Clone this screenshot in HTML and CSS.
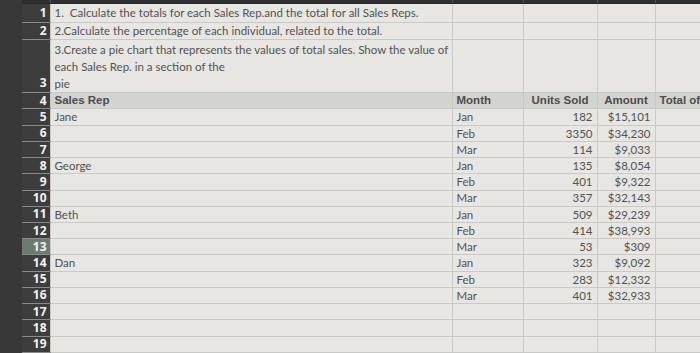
FILE: index.html
```html
<!DOCTYPE html>
<html lang="en">
<head>
  <meta charset="UTF-8">
  <title>Sales Reps</title>
  <link rel="stylesheet" href="styles.css">
</head>
<body>
  <div class="screen">
    <div class="bezel"></div>
    <table class="sheet">
      <colgroup>
        <col class="c-num">
        <col class="c-a">
        <col class="c-b">
        <col class="c-c">
        <col class="c-d">
        <col class="c-e">
      </colgroup>
      <tr class="colhead">
        <th></th><th></th><th></th><th></th><th></th><th></th>
      </tr>
      <tr class="r1">
        <th>1</th>
        <td>1. &nbsp;Calculate the totals for each Sales Rep.and the total for all Sales Reps.</td>
        <td></td><td></td><td></td><td></td>
      </tr>
      <tr class="r2">
        <th>2</th>
        <td>2.Calculate the percentage of each individual, related to the total.</td>
        <td></td><td></td><td></td><td></td>
      </tr>
      <tr class="r3">
        <th>3</th>
        <td class="wrap">3.Create a pie chart that represents the values of total sales. Show the value of<br>each Sales Rep. in a section of the<br>pie</td>
        <td></td><td></td><td></td><td></td>
      </tr>
      <tr class="head">
        <th>4</th>
        <td>Sales Rep</td>
        <td>Month</td>
        <td class="ctr">Units Sold</td>
        <td class="ctr">Amount</td>
        <td class="clip">Total of</td>
      </tr>
      <tr><th>5</th><td>Jane</td><td>Jan</td><td class="num">182</td><td class="num">$15,101</td><td></td></tr>
      <tr><th>6</th><td></td><td>Feb</td><td class="num">3350</td><td class="num">$34,230</td><td></td></tr>
      <tr><th>7</th><td></td><td>Mar</td><td class="num">114</td><td class="num">$9,033</td><td></td></tr>
      <tr><th>8</th><td>George</td><td>Jan</td><td class="num">135</td><td class="num">$8,054</td><td></td></tr>
      <tr><th>9</th><td></td><td>Feb</td><td class="num">401</td><td class="num">$9,322</td><td></td></tr>
      <tr><th>10</th><td></td><td>Mar</td><td class="num">357</td><td class="num">$32,143</td><td></td></tr>
      <tr><th>11</th><td>Beth</td><td>Jan</td><td class="num">509</td><td class="num">$29,239</td><td></td></tr>
      <tr><th>12</th><td></td><td>Feb</td><td class="num">414</td><td class="num">$38,993</td><td></td></tr>
      <tr><th class="sel">13</th><td></td><td>Mar</td><td class="num">53</td><td class="num">$309</td><td></td></tr>
      <tr><th>14</th><td>Dan</td><td>Jan</td><td class="num">323</td><td class="num">$9,092</td><td></td></tr>
      <tr><th>15</th><td></td><td>Feb</td><td class="num">283</td><td class="num">$12,332</td><td></td></tr>
      <tr><th>16</th><td></td><td>Mar</td><td class="num">401</td><td class="num">$32,933</td><td></td></tr>
      <tr><th>17</th><td></td><td></td><td></td><td></td><td></td></tr>
      <tr><th>18</th><td></td><td></td><td></td><td></td><td></td></tr>
      <tr><th>19</th><td></td><td></td><td></td><td></td><td></td></tr>
    </table>
  </div>
</body>
</html>
```

FILE: styles.css
```css
body {
  margin: 0;
  background-color: #3b3b3b;
  font-family: Lato, "Liberation Sans", sans-serif;
  overflow: hidden;
}
.screen {
  display: flex;
  width: 700px;
  height: 353px;
  overflow: hidden;
}
.bezel {
  flex: 0 0 22px;
  background-color: #383838;
}
.sheet {
  border-collapse: collapse;
  table-layout: fixed;
  width: 713px;
  flex: 0 0 auto;
}
.c-num { width: 28px; }
.c-a { width: 402px; }
.c-b { width: 71px; }
.c-c { width: 74px; }
.c-d { width: 58px; }
.c-e { width: 80px; }

.sheet th {
  background-color: #3d3d3d;
  color: #f2f2f2;
  font-family: "Open Sans", sans-serif;
  font-weight: 700;
  font-size: 12px;
  text-align: right;
  padding: 0 3px 0 0;
  border-bottom: 1px solid #8a8a8a;
  line-height: 1;
}
.sheet th.sel {
  background-color: #6d7a6f;
  color: #f4f4f4;
}
.sheet td {
  background-color: #e7e6e3;
  color: #525252;
  font-size: 11.5px;
  padding: 0 4px;
  border: 1px solid #c9c9c6;
  white-space: nowrap;
  overflow: hidden;
  line-height: 1;
  height: 15.2px;
}
.colhead th {
  height: 3px;
  padding: 0;
  background-color: #2f2f2f;
  border-bottom: 1px solid #2a2a2a;
  border-right: 1px solid #555;
}
.r1 td { height: 18px; }
.r2 td { height: 16px; }
.r3 td { height: 52px; }
.r3 th { vertical-align: bottom; padding-bottom: 3px; }
.sheet td.wrap {
  vertical-align: bottom;
  line-height: 17px;
  padding-bottom: 0;
}
.head td {
  background-color: #d3d3d0;
  color: #4c4c4c;
  font-family: "Liberation Sans", sans-serif;
  font-weight: 700;
  font-size: 11.5px;
}
.head td.ctr { text-align: center; }
.head td.clip { text-overflow: clip; }
.sheet td.num { text-align: right; }
```
